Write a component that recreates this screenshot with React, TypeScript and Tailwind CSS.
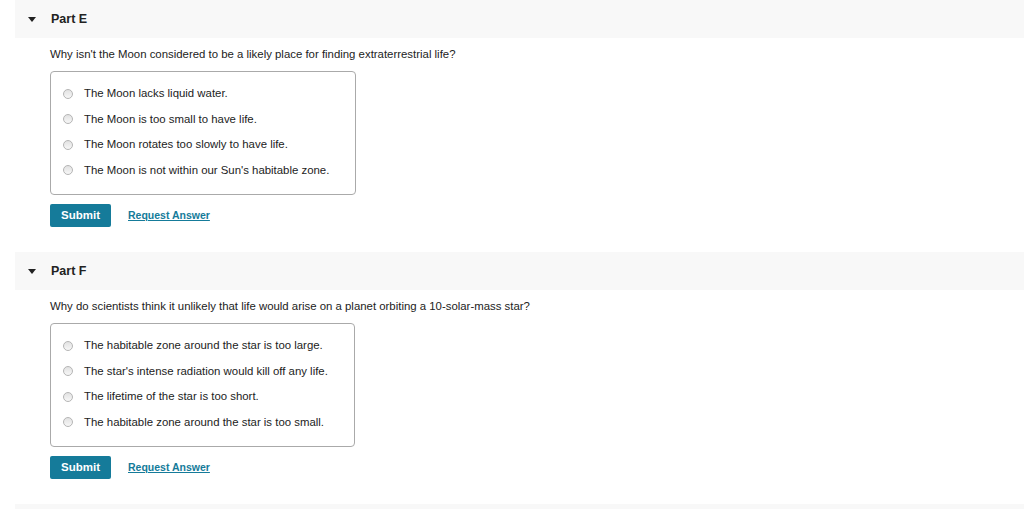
import React from 'react';

type Part = {
  label: string;
  question: string;
  options: string[];
};

const parts: Part[] = [
  {
    label: 'Part E',
    question: "Why isn't the Moon considered to be a likely place for finding extraterrestrial life?",
    options: [
      'The Moon lacks liquid water.',
      'The Moon is too small to have life.',
      'The Moon rotates too slowly to have life.',
      "The Moon is not within our Sun's habitable zone.",
    ],
  },
  {
    label: 'Part F',
    question: 'Why do scientists think it unlikely that life would arise on a planet orbiting a 10-solar-mass star?',
    options: [
      'The habitable zone around the star is too large.',
      "The star's intense radiation would kill off any life.",
      'The lifetime of the star is too short.',
      'The habitable zone around the star is too small.',
    ],
  },
];

function Radio() {
  return (
    <span className="inline-block h-[10px] w-[10px] shrink-0 rounded-full border border-[#b5b5b5] bg-gradient-to-b from-[#e2e2e2] to-[#f7f7f7]" />
  );
}

function PartSection({ part }: { part: Part }) {
  return (
    <div>
      <div className="ml-[15px] flex h-[38px] items-center bg-[#f8f8f8]">
        <svg width="8" height="5" viewBox="0 0 8 5" className="ml-[13px]">
          <path d="M0 0 L8 0 L4 5 Z" fill="#222" />
        </svg>
        <span className="ml-[15px] text-[12.5px] font-bold text-[#222]">{part.label}</span>
      </div>

      <div className="pl-[50px]">
        <p className="mt-[10px] text-[11.4px] leading-[13px] text-[#222]">{part.question}</p>

        <div className="mt-[10px] inline-flex flex-col rounded-[4px] border border-[#aaa] pb-[11px] pl-[12px] pr-[26px] pt-[9px]">
          {part.options.map((opt) => (
            <label key={opt} className="flex h-[25.5px] items-center text-[11.4px] text-[#222]">
              <Radio />
              <span className="ml-[11px]">{opt}</span>
            </label>
          ))}
        </div>

        <div className="mt-[9px] flex items-center">
          <button className="h-[23px] w-[61px] rounded-[2px] bg-[#157b9a] text-[11.5px] font-bold text-white">
            Submit
          </button>
          <a className="ml-[17px] text-[10.5px] font-bold text-[#157b9a] underline">Request Answer</a>
        </div>
      </div>
    </div>
  );
}

export default function App() {
  return (
    <div
      className="h-[509px] overflow-hidden bg-white"
      style={{ fontFamily: '"Liberation Sans", Arial, sans-serif' }}
    >
      <div className="flex flex-col gap-[25px]">
        {parts.map((p) => (
          <PartSection key={p.label} part={p} />
        ))}
        <div className="ml-[15px] h-[38px] bg-[#f8f8f8]" />
      </div>
    </div>
  );
}
